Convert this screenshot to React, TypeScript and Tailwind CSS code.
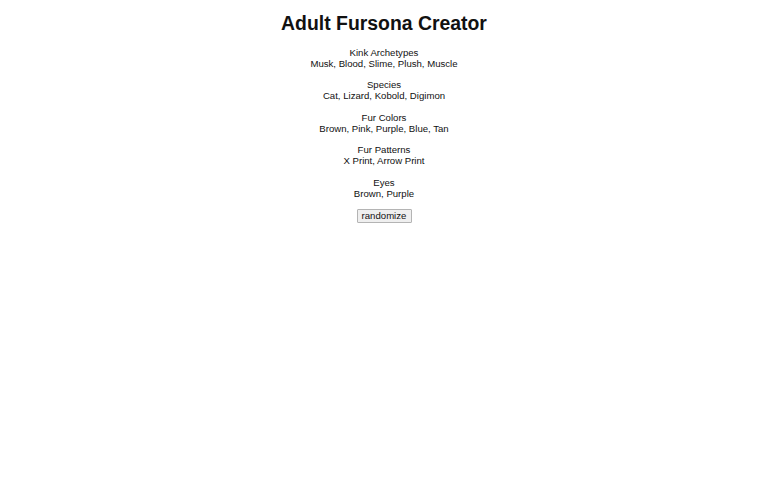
import { useState } from 'react';

const traits: { label: string; values: string[] }[] = [
  { label: 'Kink Archetypes', values: ['Musk', 'Blood', 'Slime', 'Plush', 'Muscle'] },
  { label: 'Species', values: ['Cat', 'Lizard', 'Kobold', 'Digimon'] },
  { label: 'Fur Colors', values: ['Brown', 'Pink', 'Purple', 'Blue', 'Tan'] },
  { label: 'Fur Patterns', values: ['X Print', 'Arrow Print'] },
  { label: 'Eyes', values: ['Brown', 'Purple'] },
];

const App = () => {
  const [groups, setGroups] = useState(traits);

  const randomize = () => {
    setGroups(
      groups.map((g) => ({
        ...g,
        values: [...g.values].sort(() => Math.random() - 0.5),
      }))
    );
  };

  return (
    <div className="min-h-screen bg-white text-[#111] text-center font-['Liberation_Sans',Arial,sans-serif]">
      <h1 className="pt-[12px] text-[19.4px] leading-[22px] font-bold">Adult Fursona Creator</h1>

      <div className="mt-[12.5px] flex flex-col items-center gap-[10.5px] text-[9.6px] leading-[11px]">
        {groups.map((g) => (
          <div key={g.label}>
            <div>{g.label}</div>
            <div>{g.values.join(', ')}</div>
          </div>
        ))}

        <button
          onClick={randomize}
          className="-mt-[0.5px] w-[55px] h-[14px] leading-[12px] text-[9.6px] bg-[#efefef] border border-[#b4b4b4] rounded-[1px]"
        >
          randomize
        </button>
      </div>
    </div>
  );
};

export default App;
